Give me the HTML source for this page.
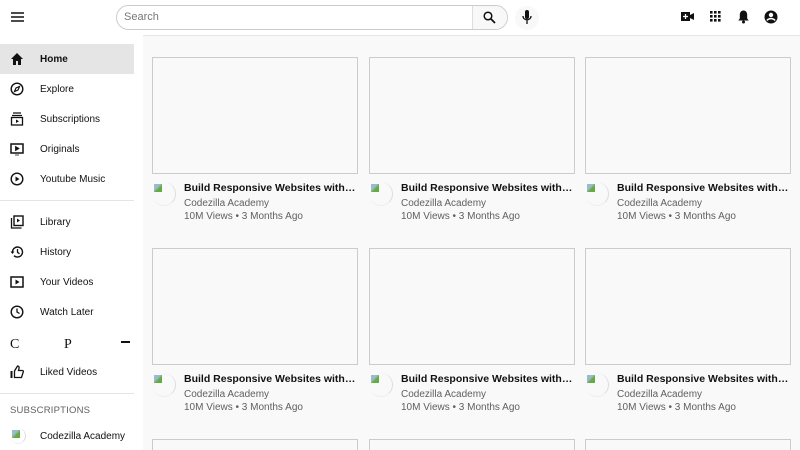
<!DOCTYPE html><html><head><style>
*{margin:0;padding:0;box-sizing:border-box}
html,body{width:800px;height:450px;overflow:hidden}
body{background:#f9f9f9;font-family:"Liberation Sans",Roboto,sans-serif;position:relative}
.hdr{position:absolute;left:0;top:0;width:800px;height:35px;background:#fff}
.hl{position:absolute;left:143px;top:35px;width:657px;height:1px;background:#e5e5e5}
.side{position:absolute;left:0;top:35px;width:143px;height:415px;background:#fff}
.it{position:absolute;left:0;width:134px;height:30px;font-size:10px;color:#111}
.it span{position:absolute;left:40px;top:10px}
.it svg{position:absolute;left:10px;top:8px}
.dv{position:absolute;left:0;width:134px;height:1px;background:#e5e5e5}
.th{position:absolute;width:206px;height:117px;border:1px solid #ccc;background:#f9f9f9}
.th.b{height:11px;border-bottom:none}
.av{position:absolute;width:24px;height:24px;border-right:1px solid #ddd;border-bottom:1px solid #eee;border-radius:12px}
.av i{position:absolute;left:2px;top:2px;width:8px;height:8px;background:linear-gradient(135deg,#9bc 40%,#6a4 60%)}
.t{position:absolute;font-size:10.5px;font-weight:bold;color:#111;width:174px;white-space:nowrap;overflow:hidden;text-overflow:ellipsis}
.m{position:absolute;font-size:10px;color:#606060;line-height:12.5px}
</style></head><body>
<div class="hdr">
<svg style="position:absolute;left:11px;top:11px" width="13" height="12" viewBox="0 0 13 12"><path d="M0 2h13M0 6h13M0 10h13" stroke="#111" stroke-width="1.4"/></svg>
<div style="position:absolute;left:116px;top:5px;width:392px;height:25px;border:1px solid #ccc;border-radius:13px;background:#fff"></div>
<div style="position:absolute;left:472px;top:6px;width:35px;height:23px;background:#f8f8f8;border-left:1px solid #ddd;border-radius:0 12px 12px 0"></div>
<span style="position:absolute;left:124px;top:11px;font-size:11px;color:#777">Search</span>
<svg style="position:absolute;left:483px;top:11px" width="13" height="13" viewBox="0 0 13 13"><circle cx="5" cy="5" r="3.8" fill="none" stroke="#111" stroke-width="1.5"/><path d="M8 8l4 4" stroke="#111" stroke-width="1.8"/></svg>
<div style="position:absolute;left:515px;top:6px;width:24px;height:24px;border-radius:12px;background:#f8f8f8"></div>
<svg style="position:absolute;left:522px;top:10px" width="10" height="15" viewBox="0 0 10 15"><rect x="3" y="0" width="4" height="9" rx="2" fill="#111"/><path d="M1 6c0 5 8 5 8 0M5 10v4" stroke="#111" stroke-width="1.3" fill="none"/></svg>
<svg style="position:absolute;left:681px;top:11px" width="13" height="11" viewBox="0 0 13 11"><rect x="0" y="1" width="9" height="9" fill="#111"/><path d="M9 4l4-2v7l-4-2z" fill="#111"/><path d="M4.5 3v5M2 5.5h5" stroke="#fff" stroke-width="1.3"/></svg>
<svg style="position:absolute;left:710px;top:11px" width="11" height="11" viewBox="0 0 11 11" fill="#111"><rect x="0" y="0" width="2.6" height="2.6"/><rect x="4" y="0" width="2.6" height="2.6"/><rect x="8" y="0" width="2.6" height="2.6"/><rect x="0" y="4" width="2.6" height="2.6"/><rect x="4" y="4" width="2.6" height="2.6"/><rect x="8" y="4" width="2.6" height="2.6"/><rect x="0" y="8" width="2.6" height="2.6"/><rect x="4" y="8" width="2.6" height="2.6"/><rect x="8" y="8" width="2.6" height="2.6"/></svg>
<svg style="position:absolute;left:738px;top:10px" width="11" height="14" viewBox="0 0 11 14" fill="#111"><path d="M5.5 0.5c-2.5 0-3.7 2-3.7 4.5v3.5L0.3 10.5h10.4L9.2 8.5V5c0-2.5-1.2-4.5-3.7-4.5z"/><circle cx="5.5" cy="12" r="1.5"/></svg>
<svg style="position:absolute;left:764px;top:10px" width="14" height="14" viewBox="0 0 14 14"><circle cx="7" cy="7" r="6.5" fill="#111"/><circle cx="7" cy="5" r="2.2" fill="#fff"/><path d="M3 10.5c1.5-2.5 6.5-2.5 8 0" stroke="#fff" stroke-width="1.6" fill="none"/></svg>
</div>
<div class="hl"></div>
<div class="side">
<div class="it" style="top:9px;background:#e5e5e5;font-weight:bold"><svg width="14" height="14" viewBox="0 0 14 14"><path d="M7 1L1 7h2v6h3V9h2v4h3V7h2z" fill="#111"/></svg><span>Home</span></div>
<div class="it" style="top:39px"><svg width="14" height="14" viewBox="0 0 14 14"><circle cx="7" cy="7" r="5.8" fill="none" stroke="#111" stroke-width="1.4"/><path d="M9.5 4.5L8 8 4.5 9.5 6 6z" fill="none" stroke="#111" stroke-width="1.2"/></svg><span>Explore</span></div>
<div class="it" style="top:69px"><svg width="14" height="14" viewBox="0 0 14 14"><path d="M3 1h8M2 3.5h10" stroke="#111" stroke-width="1.2"/><rect x="1.5" y="5.5" width="11" height="7.5" fill="none" stroke="#111" stroke-width="1.3"/><path d="M6 7.5v3.5l3-1.7z" fill="#111"/></svg><span>Subscriptions</span></div>
<div class="it" style="top:99px"><svg width="14" height="14" viewBox="0 0 14 14"><rect x="1" y="2" width="12" height="9" fill="none" stroke="#111" stroke-width="1.5"/><path d="M5.5 4.5v4l3.5-2z M5 13h4" fill="#111" stroke="#111" stroke-width="0.8"/></svg><span>Originals</span></div>
<div class="it" style="top:129px"><svg width="14" height="14" viewBox="0 0 14 14"><circle cx="7" cy="7" r="5.8" fill="none" stroke="#111" stroke-width="1.4"/><path d="M5.5 4.5v5l4-2.5z" fill="#111"/></svg><span>Youtube Music</span></div>
<div class="dv" style="top:165px"></div>
<div class="it" style="top:172px"><svg width="14" height="14" viewBox="0 0 14 14"><path d="M1.5 3v10h10" fill="none" stroke="#111" stroke-width="1.3"/><rect x="4" y="1" width="9" height="9.5" fill="none" stroke="#111" stroke-width="1.4"/><path d="M7 3.5v4l3-2z" fill="#111"/></svg><span>Library</span></div>
<div class="it" style="top:202px"><svg width="14" height="14" viewBox="0 0 14 14"><path d="M2.5 7a5 5 0 1 1 1.5 3.6" fill="none" stroke="#111" stroke-width="1.4"/><path d="M0.5 6.5h4l-2 2.5z" fill="#111"/><path d="M7.5 4v3.3l2 1.5" fill="none" stroke="#111" stroke-width="1.3"/></svg><span>History</span></div>
<div class="it" style="top:232px"><svg width="14" height="14" viewBox="0 0 14 14"><rect x="1" y="2" width="12" height="10" fill="none" stroke="#111" stroke-width="1.5"/><path d="M5.5 4.5v5l4-2.5z" fill="#111"/></svg><span>Your Videos</span></div>
<div class="it" style="top:262px"><svg width="14" height="14" viewBox="0 0 14 14"><circle cx="7" cy="7" r="5.8" fill="none" stroke="#111" stroke-width="1.4"/><path d="M7 3.5V7l2.5 1.5" fill="none" stroke="#111" stroke-width="1.3"/></svg><span>Watch Later</span></div>
<span style="position:absolute;left:10px;top:302px;font-family:'Liberation Serif',serif;font-size:14px;color:#111">C</span>
<span style="position:absolute;left:64px;top:302px;font-family:'Liberation Serif',serif;font-size:14px;color:#111">P</span>
<div style="position:absolute;left:121px;top:306px;width:9px;height:1.5px;background:#111"></div>
<div class="it" style="top:322px"><svg width="14" height="14" viewBox="0 0 14 14"><rect x="0.5" y="6" width="2" height="7" fill="#111"/><path d="M4.5 6l3-5c1.5 0 1.8 1 1.5 2.5L8.5 5.5h4c0.7 0 1 .7.8 1.3L11.5 12.5H4.5z" fill="none" stroke="#111" stroke-width="1.3"/></svg><span>Liked Videos</span></div>
<div class="dv" style="top:358px"></div>
<span style="position:absolute;left:10px;top:370px;font-size:9.5px;color:#606060;letter-spacing:0.2px">SUBSCRIPTIONS</span>
<div class="av" style="left:10px;top:393px;width:16px;height:16px"><i></i></div>
<span style="position:absolute;left:40px;top:396px;font-size:10px;color:#111">Codezilla Academy</span>
</div>
<div class="th" style="left:152px;top:57px"></div><div class="th" style="left:369px;top:57px"></div><div class="th" style="left:585px;top:57px"></div>
<div class="th" style="left:152px;top:248px"></div><div class="th" style="left:369px;top:248px"></div><div class="th" style="left:585px;top:248px"></div>
<div class="th b" style="left:152px;top:439px"></div><div class="th b" style="left:369px;top:439px"></div><div class="th b" style="left:585px;top:439px"></div>

<div class="av" style="left:152px;top:182px"><i></i></div><div class="t" style="left:184px;top:182px">Build Responsive Websites with HTML</div><div class="m" style="left:184px;top:198px">Codezilla Academy<br>10M Views • 3 Months Ago</div>
<div class="av" style="left:369px;top:182px"><i></i></div><div class="t" style="left:401px;top:182px">Build Responsive Websites with HTML</div><div class="m" style="left:401px;top:198px">Codezilla Academy<br>10M Views • 3 Months Ago</div>
<div class="av" style="left:585px;top:182px"><i></i></div><div class="t" style="left:617px;top:182px">Build Responsive Websites with HTML</div><div class="m" style="left:617px;top:198px">Codezilla Academy<br>10M Views • 3 Months Ago</div>
<div class="av" style="left:152px;top:373px"><i></i></div><div class="t" style="left:184px;top:373px">Build Responsive Websites with HTML</div><div class="m" style="left:184px;top:389px">Codezilla Academy<br>10M Views • 3 Months Ago</div>
<div class="av" style="left:369px;top:373px"><i></i></div><div class="t" style="left:401px;top:373px">Build Responsive Websites with HTML</div><div class="m" style="left:401px;top:389px">Codezilla Academy<br>10M Views • 3 Months Ago</div>
<div class="av" style="left:585px;top:373px"><i></i></div><div class="t" style="left:617px;top:373px">Build Responsive Websites with HTML</div><div class="m" style="left:617px;top:389px">Codezilla Academy<br>10M Views • 3 Months Ago</div>
</body></html>
